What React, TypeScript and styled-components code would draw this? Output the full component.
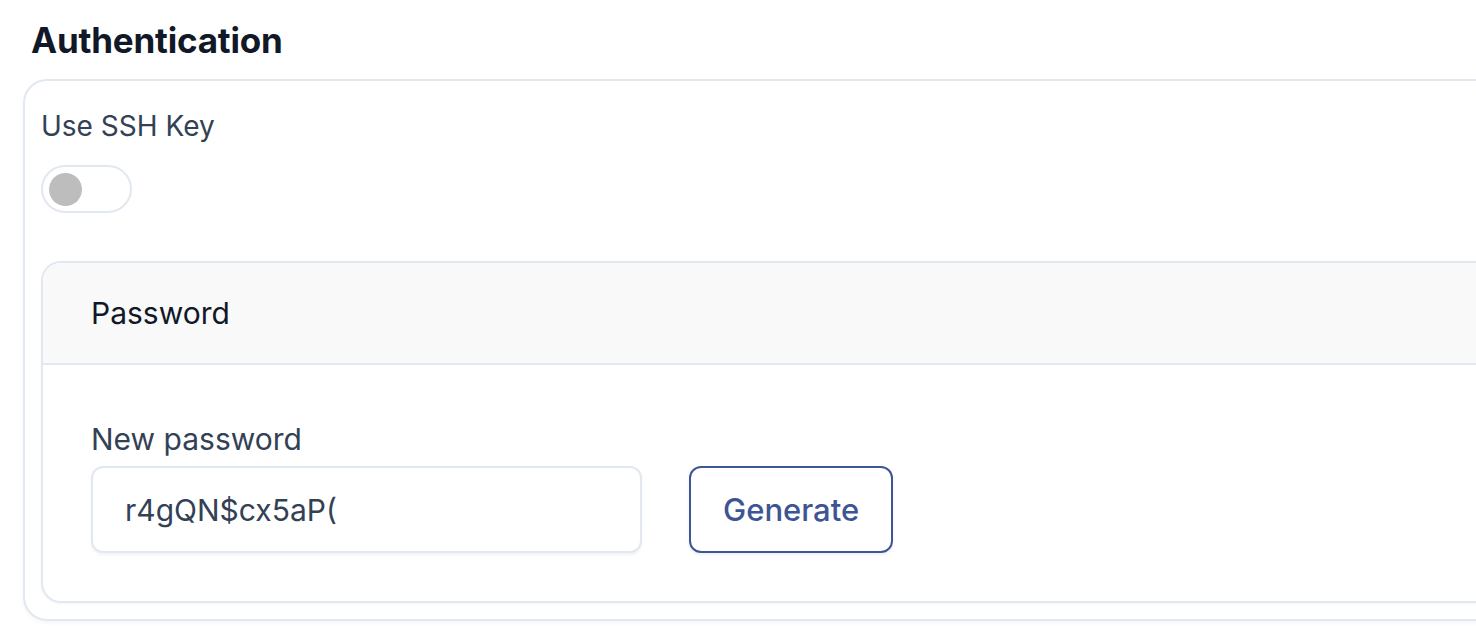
import * as React from "react";
import styled, { createGlobalStyle } from "styled-components";

const GlobalStyle = createGlobalStyle`
  html, body {
    margin: 0;
    padding: 0;
    background: #ffffff;
    overflow: hidden;
  }
  body {
    font-family: Inter, "Noto Sans", "Liberation Sans", sans-serif;
    -webkit-font-smoothing: antialiased;
  }
`;

const Page = styled.div`
  width: 1476px;
  height: 638px;
  padding: 18px 0 0 23px;
  box-sizing: border-box;
  overflow: hidden;
`;

const Heading = styled.h2`
  margin: 0 0 17px 8px;
  font-size: 35px;
  line-height: 44px;
  font-weight: 700;
  color: #111827;
  letter-spacing: -0.2px;
`;

const Card = styled.section`
  width: 1520px;
  box-sizing: border-box;
  border: 2px solid #e2e8f0;
  border-radius: 24px;
  padding: 27px 16px 16px 16px;
  box-shadow: 0 2px 4px rgba(15, 23, 42, 0.04);
`;

const FieldLabel = styled.div<{ $size?: number }>`
  font-size: ${(p) => p.$size ?? 28}px;
  line-height: 36px;
  font-weight: 400;
  color: #334155;
`;

const Switch = styled.button`
  display: flex;
  align-items: center;
  width: 91px;
  height: 48px;
  margin: 21px 0 48px 0;
  padding: 0 0 0 6px;
  box-sizing: border-box;
  border: 2px solid #e2e8f0;
  border-radius: 24px;
  background: #ffffff;
  cursor: pointer;
`;

const Knob = styled.span`
  width: 33px;
  height: 33px;
  border-radius: 50%;
  background: #bdbdbd;
`;

const SubCard = styled.div`
  border: 2px solid #e2e8f0;
  border-radius: 20px;
  overflow: hidden;
  box-shadow: 0 1px 3px rgba(15, 23, 42, 0.04);
`;

const SubHeader = styled.div`
  display: flex;
  align-items: center;
  height: 100px;
  padding: 0 48px;
  background: #f9f9f9;
  border-bottom: 2px solid #e2e8f0;
  font-size: 30px;
  font-weight: 400;
  color: #111827;
`;

const SubBody = styled.div`
  padding: 56px 48px 48px 48px;
`;

const Row = styled.div`
  display: flex;
  align-items: center;
  gap: 47px;
  margin-top: 9px;
`;

const Input = styled.input`
  width: 551px;
  height: 87px;
  box-sizing: border-box;
  padding: 0 32px;
  border: 2px solid #e2e8f0;
  border-radius: 12px;
  background: #ffffff;
  box-shadow: 0 2px 3px rgba(15, 23, 42, 0.05);
  font-family: inherit;
  font-size: 30px;
  color: #334155;
  outline: none;
`;

const OutlineButton = styled.button`
  height: 87px;
  padding: 0 32px;
  box-sizing: border-box;
  border: 2px solid #3d5796;
  border-radius: 12px;
  background: #ffffff;
  box-shadow: 0 2px 3px rgba(15, 23, 42, 0.06);
  font-family: inherit;
  font-size: 31px;
  font-weight: 500;
  color: #3d5593;
  cursor: pointer;
`;

export default function App() {
  return (
    <Page>
      <GlobalStyle />
      <Heading>Authentication</Heading>
      <Card>
        <FieldLabel>Use SSH Key</FieldLabel>
        <Switch aria-label="Use SSH Key">
          <Knob />
        </Switch>
        <SubCard>
          <SubHeader>Password</SubHeader>
          <SubBody>
            <FieldLabel $size={30}>New password</FieldLabel>
            <Row>
              <Input defaultValue="r4gQN$cx5aP(" />
              <OutlineButton>Generate</OutlineButton>
            </Row>
          </SubBody>
        </SubCard>
      </Card>
    </Page>
  );
}
